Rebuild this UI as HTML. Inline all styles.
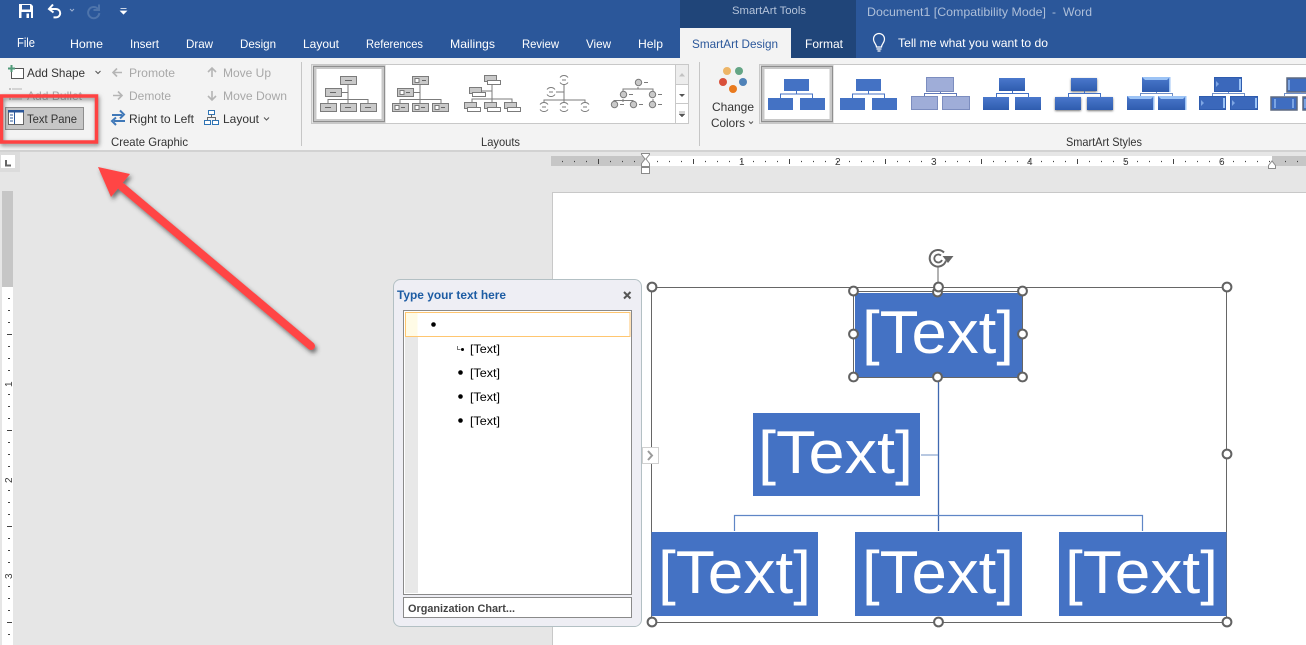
<!DOCTYPE html>
<html lang="en"><head><meta charset="utf-8"><title>Document1 - Word</title>
<style>
html,body{margin:0;padding:0;background:#e6e6e6;width:1306px;height:645px;overflow:hidden}
svg{display:block;position:absolute;left:0;top:0}
text{font-family:"Liberation Sans",sans-serif;font-size:12px;fill:#3a3a3a}
.t{fill:#fff}.g{fill:#a8a8a8}.d{fill:#333}
.big{font-size:60px;fill:#fff}
</style></head><body>
<svg width="1306" height="645" viewBox="0 0 1306 645" xmlns="http://www.w3.org/2000/svg">
<defs>
<filter id="sh" x="-20%" y="-20%" width="140%" height="140%"><feDropShadow dx="2" dy="3" stdDeviation="2" flood-color="#333" flood-opacity=".65"/></filter>
<linearGradient id="gr" x1="0" y1="0" x2="0" y2="1"><stop offset="0" stop-color="#4a78cc"/><stop offset="1" stop-color="#2f5cae"/></linearGradient>
<g id="h"><circle r="4.400" fill="#fff" stroke="#626262" stroke-width="2"/></g>
<g id="arc"><path d="M-4 -2.500a5 5 0 0 1 8 0M-4 2.500a5 5 0 0 0 8 0M-2 0h4" fill="none" stroke="#7b7b7b"/></g>
</defs>

<!-- base -->
<rect width="1306" height="645" fill="#e6e6e6"/>
<rect width="1306" height="58" fill="#2b579a"/>
<rect x="680" width="176" height="28" fill="#204579"/>
<rect x="791" y="28" width="65" height="30" fill="#204579"/>
<rect x="680" y="28" width="111" height="30" fill="#f3f3f3"/>
<rect y="58" width="1306" height="92" fill="#f3f3f3"/>
<rect y="150" width="1306" height="2" fill="#d2d2d2"/>

<!-- QAT -->
<path d="M19 4h12l2 2v12H19z" fill="#fff"/><rect x="22" y="5" width="8" height="4.500" fill="#2b579a"/><rect x="21.500" y="12" width="9.500" height="6" fill="#2b579a"/><rect x="26.500" y="13.500" width="2.500" height="4.500" fill="#fff"/>
<path d="M53 4.500L49 9l4.500 3.500M49.500 9H56a4.200 4.200 0 0 1 0 8.400h-2.500" fill="none" stroke="#fff" stroke-width="2"/>
<path d="M70 9l2 2 2-2" fill="none" stroke="#9fb3d3" stroke-width="1"/>
<path d="M99 4.500v5.500h-5.500M98 9a5.600 5.600 0 1 0 1.300 4" fill="none" stroke="#4e74ab" stroke-width="2"/>
<path d="M120.500 8.500h6M120.500 11h6l-3 3z" fill="#fff" stroke="#fff" stroke-width=".8"/>

<!-- tabs -->
<g class="tabs">
<text class="t" x="17" y="47" textLength="18" lengthAdjust="spacingAndGlyphs" style="font-size:13px">File</text>
<text class="t" x="70" y="48" textLength="33" lengthAdjust="spacingAndGlyphs">Home</text>
<text class="t" x="130" y="48" textLength="29" lengthAdjust="spacingAndGlyphs">Insert</text>
<text class="t" x="186" y="48" textLength="27" lengthAdjust="spacingAndGlyphs">Draw</text>
<text class="t" x="240" y="48" textLength="36" lengthAdjust="spacingAndGlyphs">Design</text>
<text class="t" x="303" y="48" textLength="36" lengthAdjust="spacingAndGlyphs">Layout</text>
<text class="t" x="366" y="48" textLength="57" lengthAdjust="spacingAndGlyphs">References</text>
<text class="t" x="450" y="48" textLength="45" lengthAdjust="spacingAndGlyphs">Mailings</text>
<text class="t" x="522" y="48" textLength="37" lengthAdjust="spacingAndGlyphs">Review</text>
<text class="t" x="586" y="48" textLength="25" lengthAdjust="spacingAndGlyphs">View</text>
<text class="t" x="638" y="48" textLength="25" lengthAdjust="spacingAndGlyphs">Help</text>
<text x="692" y="48" textLength="86" lengthAdjust="spacingAndGlyphs" style="fill:#2b579a">SmartArt Design</text>
<text class="t" x="805" y="48" textLength="38" lengthAdjust="spacingAndGlyphs">Format</text>
<text class="t" x="898" y="47" textLength="150" lengthAdjust="spacingAndGlyphs">Tell me what you want to do</text>
<text x="732" y="14" textLength="74" lengthAdjust="spacingAndGlyphs" style="fill:#b4c3da;font-size:11px">SmartArt Tools</text>
<text x="867" y="16" textLength="179" lengthAdjust="spacingAndGlyphs" style="fill:#aebfd9">Document1 [Compatibility Mode]</text>
<text x="1052" y="16" style="fill:#aebfd9">-</text>
<text x="1063" y="16" textLength="29" lengthAdjust="spacingAndGlyphs" style="fill:#aebfd9">Word</text>
</g>
<!-- bulb -->
<path d="M876.500 47c0-3-3-4-3-8a5.500 5.500 0 0 1 11 0c0 4-3 5-3 8z" fill="none" stroke="#fff" stroke-width="1.200"/><path d="M876.500 49h5M877.500 51h3" stroke="#fff" stroke-width="1.200"/>

<!-- Create graphic -->
<rect x="11.500" y="68.500" width="12" height="10" fill="#fff" stroke="#555"/>
<path d="M8 68.500h7M11.500 65v7" stroke="#4f9a78" stroke-width="2"/>
<text class="d" x="27" y="77" textLength="58" lengthAdjust="spacingAndGlyphs">Add Shape</text>
<path d="M95.500 71l2.500 2.500 2.500-2.500" fill="none" stroke="#555"/>
<path d="M12 89h10M12 99h10" stroke="#b5b5b5"/><circle cx="10" cy="89" r="1" fill="#b5b5b5"/><circle cx="10" cy="99" r="1" fill="#b5b5b5"/>
<text class="g" x="27" y="100" textLength="55" lengthAdjust="spacingAndGlyphs">Add Bullet</text>
<rect x="5.500" y="107.500" width="78" height="22" fill="#c6c6c6" stroke="#8e8e8e"/>
<rect x="8.500" y="110.500" width="15" height="14" fill="#fff" stroke="#666"/><rect x="8" y="110" width="16" height="2.500" fill="#2b579a"/><rect x="14" y="112" width="1" height="12" fill="#2b579a"/><path d="M10 115h3M10 118h3M10 121h3" stroke="#2b579a"/>
<text class="d" x="27" y="123" textLength="50" lengthAdjust="spacingAndGlyphs">Text Pane</text>

<path d="M113 72.500h9M117 68.500l-4 4 4 4" fill="none" stroke="#b5b5b5" stroke-width="1.600"/>
<text class="g" x="129" y="77" textLength="46" lengthAdjust="spacingAndGlyphs">Promote</text>
<path d="M113 95.500h9M118 91.500l4 4-4 4" fill="none" stroke="#b5b5b5" stroke-width="1.600"/>
<text class="g" x="129" y="100" textLength="42" lengthAdjust="spacingAndGlyphs">Demote</text>
<path d="M112 115h10M120 110.500l4 4-4 4" fill="none" stroke="#3f78b8" stroke-width="2"/>
<path d="M114 121h11M116 117.500l-4 3.500 4 4" fill="none" stroke="#3f78b8" stroke-width="2"/>
<text class="d" x="129" y="123" textLength="65" lengthAdjust="spacingAndGlyphs">Right to Left</text>

<path d="M212 77v-9M208 72l4-4 4 4" fill="none" stroke="#b5b5b5" stroke-width="1.600"/>
<text class="g" x="223" y="77" textLength="48" lengthAdjust="spacingAndGlyphs">Move Up</text>
<path d="M212 91v9M208 96l4 4 4-4" fill="none" stroke="#b5b5b5" stroke-width="1.600"/>
<text class="g" x="223" y="100" textLength="64" lengthAdjust="spacingAndGlyphs">Move Down</text>
<g fill="#fff" stroke="#2f74b5"><rect x="208.500" y="110.500" width="6" height="4"/><rect x="204.500" y="120.500" width="6" height="4"/><rect x="212.500" y="120.500" width="6" height="4"/><path d="M211.500 114.500v3M207.500 120.500v-3h8v3" fill="none" stroke="#666"/></g>
<text class="d" x="223" y="123" textLength="36" lengthAdjust="spacingAndGlyphs">Layout</text>
<path d="M264 117.500l2.500 2.500 2.500-2.500" fill="none" stroke="#555"/>
<text class="d" x="111" y="146" textLength="77" lengthAdjust="spacingAndGlyphs">Create Graphic</text>
<rect x="301" y="62" width="1" height="84" fill="#c6c6c6"/>

<!-- Layouts gallery -->
<rect x="311.500" y="64.500" width="377" height="59" fill="#fff" stroke="#c8c8c8"/>
<rect x="314.500" y="67" width="69" height="54" fill="#fff" stroke="#c8c8c8" stroke-width="4"/>
<rect x="313.500" y="66.500" width="71" height="55" fill="none" stroke="#8f8f8f"/>
<rect x="675.500" y="64.500" width="13" height="20" fill="#ededed" stroke="#c8c8c8"/>
<rect x="675.500" y="84.500" width="13" height="19" fill="#fff" stroke="#c8c8c8"/>
<rect x="675.500" y="103.500" width="13" height="20" fill="#fff" stroke="#c8c8c8"/>
<path d="M682 73l3 3.500h-6z" fill="#c2c2c2"/><path d="M679 94h6l-3 3z" fill="#555"/><path d="M679 112h6M679 114h6l-3 3z" fill="#555" stroke="#555" stroke-width=".5"/>

<g fill="#c9c9c9" stroke="#7b7b7b">
<!-- L1 -->
<path d="M348 84v19M342 92.500h6M328 103v-3.500h40v3.500" fill="none"/>
<rect x="340.500" y="76.500" width="16" height="8"/><rect x="325.500" y="88.500" width="16" height="8"/><rect x="320.500" y="103.500" width="16" height="8"/><rect x="340.500" y="103.500" width="16" height="8"/><rect x="360.500" y="103.500" width="16" height="8"/>
<!-- L2 -->
<path d="M420 84v19M414 92.500h6M400 103v-3.500h41v3.500" fill="none"/>
<rect x="412.500" y="76.500" width="16" height="8"/><rect x="397.500" y="88.500" width="16" height="8"/><rect x="392.500" y="103.500" width="16" height="8"/><rect x="412.500" y="103.500" width="16" height="8"/><rect x="432.500" y="103.500" width="16" height="8"/>
<!-- L3 -->
<path d="M492 84v18M482 91h10M472 102v-3h40v3" fill="none"/>
<rect x="484.500" y="75.500" width="12" height="6"/><rect x="469.500" y="87.500" width="12" height="6"/><rect x="464.500" y="102.500" width="12" height="6"/><rect x="484.500" y="102.500" width="12" height="6"/><rect x="504.500" y="102.500" width="12" height="6"/>
<g fill="#fff"><rect x="487.500" y="80.500" width="13" height="4"/><rect x="472.500" y="92.500" width="13" height="4"/><rect x="467.500" y="107.500" width="13" height="4"/><rect x="487.500" y="107.500" width="13" height="4"/><rect x="507.500" y="107.500" width="13" height="4"/></g>
<!-- L4 -->
<path d="M564 85v18M556 92h8M544 103v-3h41v3" fill="none"/>
<!-- L5 -->
<path d="M638 87v2.500M623 94v-5h30v5M623 99v3M653 99v5M623 100.500h-9v2M623 100.500h10v2" fill="none"/>
<circle cx="638.500" cy="82.500" r="3.200"/><circle cx="623.500" cy="94.500" r="3.200"/><circle cx="652.500" cy="94.500" r="3.200"/><circle cx="614.500" cy="104.500" r="3.200"/><circle cx="633.500" cy="104.500" r="3.200"/><circle cx="652.500" cy="104.500" r="3.200"/>
<path d="M644 82.500h4M629 94.500h4M658 94.500h4M620 104.500h4M639 104.500h4M658 104.500h4" fill="none"/>
</g>
<use href="#arc" x="564" y="80"/><use href="#arc" x="551" y="92"/><use href="#arc" x="544" y="107"/><use href="#arc" x="564" y="107"/><use href="#arc" x="585" y="107"/>
<g fill="#fff" stroke="#7b7b7b"><rect x="415" y="78.500" width="4" height="4"/><rect x="400" y="90.500" width="4" height="4"/><rect x="395" y="105.500" width="4" height="4"/><rect x="415" y="105.500" width="4" height="4"/><rect x="435" y="105.500" width="4" height="4"/></g>
<g stroke="#666"><path d="M345 80.500h7M330 92.500h6M325 107.500h6M345 107.500h6M365 107.500h6M422 80.500h4M406 92.500h4M401 107.500h4M421 107.500h4M441 107.500h4"/></g>
<text class="d" x="481" y="146" textLength="39" lengthAdjust="spacingAndGlyphs">Layouts</text>
<rect x="699" y="62" width="1" height="84" fill="#c6c6c6"/>

<!-- change colors -->
<circle cx="727" cy="71" r="4" fill="#edb567"/><circle cx="739" cy="71" r="4" fill="#64a585"/><circle cx="723" cy="82" r="4" fill="#d9503a"/><circle cx="743" cy="82" r="4" fill="#4f82b8"/><circle cx="733" cy="89" r="4" fill="#e97a1e"/>
<text class="d" x="712" y="111" textLength="42" lengthAdjust="spacingAndGlyphs">Change</text>
<text class="d" x="711" y="127" textLength="34" lengthAdjust="spacingAndGlyphs">Colors</text>
<path d="M749 121.500l2 2 2-2" fill="none" stroke="#555"/>

<!-- Styles gallery -->
<rect x="759.500" y="64.500" width="560" height="59" fill="#fff" stroke="#c8c8c8"/>
<rect x="762.500" y="67" width="69" height="54" fill="#fff" stroke="#c8c8c8" stroke-width="4"/>
<rect x="761.500" y="66.500" width="71" height="55" fill="none" stroke="#8f8f8f"/>
<g fill="#4472c4">
<rect x="784" y="79" width="25" height="12"/><rect x="768" y="98" width="25" height="12"/><rect x="800" y="98" width="25" height="12"/>
<path d="M796.500 91v3M780.500 98v-4h32v4" fill="none" stroke="#4472c4"/>
<rect x="856" y="79" width="25" height="12"/><rect x="840" y="98" width="25" height="12"/><rect x="872" y="98" width="25" height="12"/>
<path d="M868.500 91v3M852.500 98v-4h32v4" fill="none" stroke="#4472c4"/>
</g>
<g fill="#9fadd8" stroke="#7c8dbf"><rect x="926.500" y="77.500" width="27" height="14"/><rect x="911.500" y="96.500" width="26" height="13"/><rect x="942.500" y="96.500" width="27" height="13"/></g>
<path d="M940.500 92v2M924.500 96v-2.500h32V96" fill="none" stroke="#5f78b8"/>
<g fill="url(#gr)"><rect x="999" y="78" width="26" height="13"/><rect x="983" y="97" width="26" height="13"/><rect x="1015" y="97" width="26" height="13"/></g>
<path d="M1012.500 91v2M996.500 97v-3.500h32V97" fill="none" stroke="#4472c4"/>
<g fill="url(#gr)" style="filter:drop-shadow(0 1px 1px #777)"><rect x="1071" y="78" width="26" height="13"/><rect x="1055" y="97" width="26" height="13"/><rect x="1087" y="97" width="26" height="13"/></g>
<path d="M1084.500 91v2M1068.500 97v-3.500h32V97" fill="none" stroke="#4472c4"/>

<!-- style 6: bevel with light top and right edges -->
<g fill="url(#gr)"><rect x="1142" y="77" width="28" height="15"/><rect x="1127" y="96" width="27" height="14"/><rect x="1158" y="96" width="28" height="14"/></g>
<g fill="#9cc3f5"><path d="M1142 77h28l-3 3h-22z"/><path d="M1127 96h27l-3 3h-21z"/><path d="M1158 96h28l-3 3h-22z"/><rect x="1169" y="77" width="1.500" height="15"/><rect x="1153" y="96" width="1.500" height="14"/><rect x="1185" y="96" width="1.500" height="14"/></g>
<path d="M1156.500 92v2M1140.500 96v-2.500h32V96" fill="none" stroke="#6f8fc8"/>

<!-- style 7: dark edge, light right strip, left notch -->
<g fill="#3b68bb" stroke="#2f5cae"><rect x="1214.500" y="77.500" width="27" height="14"/><rect x="1199.500" y="96.500" width="26" height="13"/><rect x="1230.500" y="96.500" width="27" height="13"/></g>
<g fill="#9cc3f5"><rect x="1239" y="79" width="2" height="11"/><rect x="1223" y="98" width="2" height="10"/><rect x="1255" y="98" width="2" height="10"/></g>
<g fill="#7fa6e4"><path d="M1216 81l3 3-3 3z"/><path d="M1201 100l3 3-3 3z"/><path d="M1232 100l3 3-3 3z"/></g>
<path d="M1228.500 92v2M1212.500 96v-2.500h32V96" fill="none" stroke="#6f8fc8"/>

<!-- style 8: grey border -->
<g fill="#3f6dc0" stroke="#5f6a80" stroke-width="1.500"><rect x="1287" y="78" width="30" height="14"/><rect x="1271" y="97" width="26" height="13"/><rect x="1303" y="97" width="26" height="13"/></g>
<path d="M1289 80v10M1275 99v9M1293 99v9M1305 99v9" stroke="#8fb6ee" stroke-width="1.500"/>
<path d="M1300.500 92v2M1284.500 96v-2.500h32V96" fill="none" stroke="#6f8fc8"/>
<text class="d" x="1066" y="146" textLength="76" lengthAdjust="spacingAndGlyphs">SmartArt Styles</text>

<!-- tab stop box -->
<rect x="0" y="152" width="20" height="20" fill="#dcdcdc"/><rect x="1" y="155" width="14" height="13" fill="#fff"/><path d="M6 160v5.500h5" fill="none" stroke="#666" stroke-width="2"/>

<!-- horizontal ruler -->
<rect x="551" y="156" width="95" height="10" fill="#c6c6c6"/><rect x="646" y="156" width="626" height="10" fill="#fff"/><rect x="1272" y="156" width="34" height="10" fill="#c6c6c6"/>
<path d="M562 161.500H645M657 161.500H1270M1285 161.500H1306" stroke="#444" stroke-width="1.200" stroke-dasharray="1 11"/>
<path d="M598.500 159v5M693.500 159v5M789.500 159v5M885.500 159v5M981.500 159v5M1077.500 159v5M1173.500 159v5" stroke="#444"/>
<g style="font-size:10px"><text x="739" y="165" style="font-size:10px">1</text><text x="835" y="165" style="font-size:10px">2</text><text x="931" y="165" style="font-size:10px">3</text><text x="1027" y="165" style="font-size:10px">4</text><text x="1123" y="165" style="font-size:10px">5</text><text x="1219" y="165" style="font-size:10px">6</text></g>
<path d="M641.500 153.500h8v1l-3.500 4.500 3.500 4.500v3h-8v-3l3.500-4.500-3.500-4.500z" fill="#fff" stroke="#8a8a8a"/><rect x="641.500" y="167.500" width="8" height="6" fill="#fff" stroke="#8a8a8a"/>
<path d="M1268.500 168.500v-3l3.500-4.500 3.500 4.500v3z" fill="#fff" stroke="#8a8a8a"/>

<!-- vertical ruler -->
<rect x="2" y="191" width="11" height="96" fill="#c6c6c6"/><rect x="2" y="287" width="11" height="358" fill="#fff"/>
<path d="M9 298V645" stroke="#444" stroke-width="2" stroke-dasharray="1 11"/>
<path d="M7 334.500h5M7 430.500h5M7 526.500h5M7 622.500h5" stroke="#444"/>
<rect x="4" y="376" width="9" height="12" fill="#fff"/><rect x="4" y="472" width="9" height="12" fill="#fff"/><rect x="4" y="568" width="9" height="12" fill="#fff"/>
<text transform="translate(5,379) rotate(-90) translate(-8,7)" style="font-size:10px">1</text>
<text transform="translate(5,475) rotate(-90) translate(-8,7)" style="font-size:10px">2</text>
<text transform="translate(5,571) rotate(-90) translate(-8,7)" style="font-size:10px">3</text>

<!-- page -->
<rect x="552.500" y="192.500" width="760" height="460" fill="#fff" stroke="#c8c8c8"/>

<!-- diagram -->
<rect x="651.500" y="287.500" width="575" height="335" fill="none" stroke="#666" stroke-width="1"/>
<path d="M938.500 378V531" stroke="#3f68b0" stroke-width="1.300"/>
<path d="M921 455h17" stroke="#8ea6cf" stroke-width="1.300"/>
<path d="M734.500 531V515.500H1142.500V531" fill="none" stroke="#5f86c6" stroke-width="1.200"/>
<g fill="#4472c4"><rect x="855" y="293" width="168" height="84.500"/><rect x="753" y="413" width="167" height="83"/><rect x="651.500" y="532" width="166.500" height="84"/><rect x="855" y="532" width="167" height="84"/><rect x="1059" y="532" width="167.500" height="84"/></g>
<rect x="853.500" y="291.500" width="169" height="86" fill="none" stroke="#666"/>
<text class="big" x="862" y="353" textLength="152" lengthAdjust="spacingAndGlyphs">[Text]</text>
<text class="big" x="758" y="473" textLength="155" lengthAdjust="spacingAndGlyphs">[Text]</text>
<text class="big" x="658" y="593" textLength="153" lengthAdjust="spacingAndGlyphs">[Text]</text>
<text class="big" x="862" y="593" textLength="152" lengthAdjust="spacingAndGlyphs">[Text]</text>
<text class="big" x="1065" y="593" textLength="153" lengthAdjust="spacingAndGlyphs">[Text]</text>

<!-- rotate handle -->
<path d="M938 267v20" stroke="#666"/>
<path d="M944 252.500a8.300 8.300 0 1 0 2 8" fill="none" stroke="#666" stroke-width="2"/>
<path d="M941 255.500a4 4 0 1 0 1 4.500" fill="none" stroke="#666" stroke-width="1.800"/>
<path d="M942.500 256h11l-5.500 7z" fill="#666"/>
<!-- handles -->
<use href="#h" x="652" y="287"/><use href="#h" x="1227" y="287"/><use href="#h" x="652" y="622"/><use href="#h" x="1227" y="622"/><use href="#h" x="938.500" y="622"/><use href="#h" x="1227" y="454"/>
<use href="#h" x="937.500" y="292"/><use href="#h" x="938.500" y="287"/>
<use href="#h" x="853.500" y="291"/><use href="#h" x="1022.500" y="291"/><use href="#h" x="853.500" y="334"/><use href="#h" x="1022.500" y="334"/><use href="#h" x="853.500" y="377"/><use href="#h" x="937.500" y="377"/><use href="#h" x="1022.500" y="377"/>

<!-- text pane -->
<rect x="393.500" y="279.500" width="248" height="347" rx="7" fill="#eeeef4" stroke="#b3c0c4"/>
<text x="397" y="299" textLength="109" lengthAdjust="spacingAndGlyphs" style="font-weight:700;fill:#1d5ca3">Type your text here</text>
<path d="M624 292l6.500 6.500M630.500 292l-6.500 6.500" stroke="#555" stroke-width="2"/>
<rect x="403.500" y="310.500" width="228" height="284" fill="#fff" stroke="#8a8a8a"/>
<rect x="405" y="312" width="13" height="281" fill="#e8e8e8"/>
<rect x="405.500" y="312.500" width="224.500" height="24" fill="#fff" stroke="#ffc670"/>
<rect x="406" y="313" width="11.500" height="23" fill="#fffbe6"/>
<circle cx="433.500" cy="324.500" r="2.300" fill="#000"/>
<path d="M457.500 346v3.500h3" fill="none" stroke="#777"/><circle cx="462.500" cy="349.500" r="1.500" fill="#000"/>
<circle cx="460.500" cy="372.500" r="2.300" fill="#000"/><circle cx="460.500" cy="396.500" r="2.300" fill="#000"/><circle cx="460.500" cy="420.500" r="2.300" fill="#000"/>
<g style="fill:#000"><text x="470" y="353" textLength="30" lengthAdjust="spacingAndGlyphs" style="fill:#000">[Text]</text><text x="470" y="377" textLength="30" lengthAdjust="spacingAndGlyphs" style="fill:#000">[Text]</text><text x="470" y="401" textLength="30" lengthAdjust="spacingAndGlyphs" style="fill:#000">[Text]</text><text x="470" y="425" textLength="30" lengthAdjust="spacingAndGlyphs" style="fill:#000">[Text]</text></g>
<rect x="403.500" y="597.500" width="228" height="20" fill="#fff" stroke="#8a8a8a"/>
<text x="408" y="612" textLength="107" lengthAdjust="spacingAndGlyphs" style="font-size:11px;font-weight:700;fill:#444">Organization Chart...</text>
<rect x="642.500" y="447.500" width="16" height="16" fill="#fff" stroke="#d0d0d0"/>
<path d="M648 451l4 4.500-4 4.500" fill="none" stroke="#9a9a9a" stroke-width="2"/>

<!-- annotation -->
<rect x="1.500" y="96" width="95" height="46" fill="none" stroke="#ff4242" stroke-width="3.500" style="filter:drop-shadow(1px 2px 2px rgba(60,60,60,.6))"/>
<g filter="url(#sh)">
<path d="M122 187L311 346" stroke="#ff4444" stroke-width="8" stroke-linecap="round"/>
<path d="M98 167L130 174L111 197z" fill="#ff4444"/>
</g>
</svg>
</body></html>
